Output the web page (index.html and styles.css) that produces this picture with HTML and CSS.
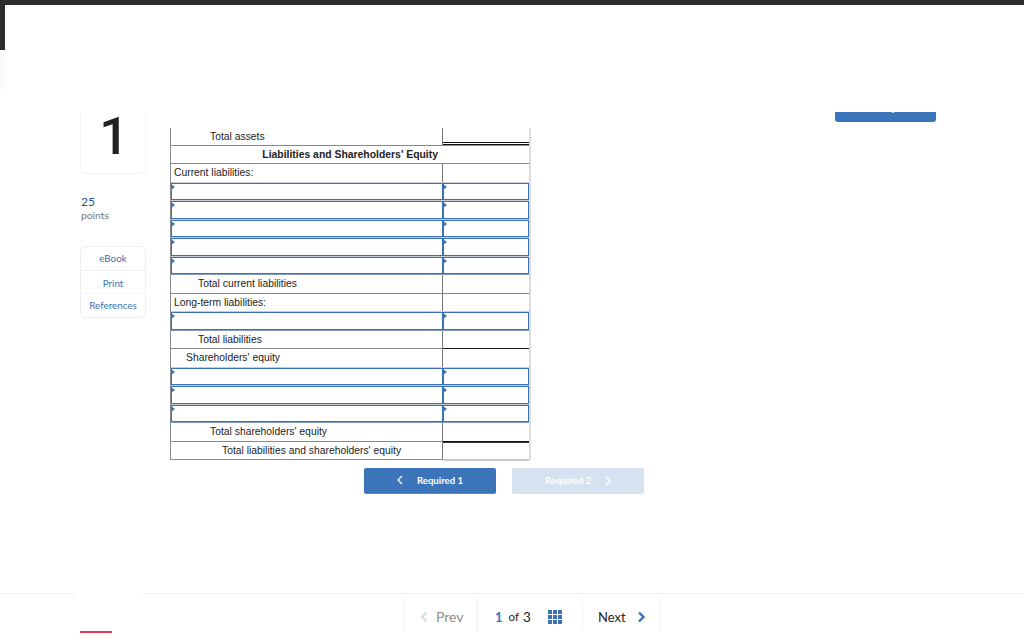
FILE: index.html
```html
<!DOCTYPE html>
<html lang="en">
<head>
<meta charset="utf-8">
<title>Balance sheet</title>
<link rel="stylesheet" href="styles.css">
</head>
<body>
<div class="page">
  <header class="top">
    <div class="top-bar"></div>
    <div class="top-side"><div class="side-dark"></div><div class="side-pale"></div></div>
  </header>
  <main class="main">
    <aside class="side">
      <div class="qnum">1</div>
      <div class="pts"><div class="pts-n">25</div><div class="pts-l">points</div></div>
      <nav class="links">
        <a class="link link-a">eBook</a>
        <a class="link link-b">Print</a>
        <a class="link link-c">References</a>
      </nav>
    </aside>
    <section class="work">
      <div class="sheet">
        <div class="row first"><div class="lab in2">Total assets</div><div class="val dbl"></div></div>
        <div class="row"><div class="head">Liabilities and Shareholders' Equity</div></div>
        <div class="row"><div class="lab">Current liabilities:</div><div class="val"></div></div>
        <div class="row inp"><div class="fld"></div><div class="fld"></div></div>
        <div class="row inp"><div class="fld"></div><div class="fld"></div></div>
        <div class="row inp"><div class="fld"></div><div class="fld"></div></div>
        <div class="row inp"><div class="fld"></div><div class="fld"></div></div>
        <div class="row inp"><div class="fld"></div><div class="fld"></div></div>
        <div class="row"><div class="lab in1">Total current liabilities</div><div class="val"></div></div>
        <div class="row"><div class="lab">Long-term liabilities:</div><div class="val"></div></div>
        <div class="row inp"><div class="fld"></div><div class="fld"></div></div>
        <div class="row"><div class="lab in1">Total liabilities</div><div class="val sum"></div></div>
        <div class="row"><div class="lab in0">Shareholders' equity</div><div class="val"></div></div>
        <div class="row inp"><div class="fld"></div><div class="fld"></div></div>
        <div class="row inp"><div class="fld"></div><div class="fld"></div></div>
        <div class="row inp"><div class="fld"></div><div class="fld"></div></div>
        <div class="row"><div class="lab in2">Total shareholders' equity</div><div class="val sum"></div></div>
        <div class="row"><div class="lab in3">Total liabilities and shareholders' equity</div><div class="val dbl-b"></div></div>
      </div>
      <div class="steps">
        <button class="step on"><svg class="chev" viewBox="0 0 6 10"><path d="M5 1 1 5l4 4"/></svg><span>Required 1</span></button>
        <button class="step off"><span>Required 2</span><svg class="chev" viewBox="0 0 6 10"><path d="M1 1l4 4-4 4"/></svg></button>
      </div>
    </section>
    <div class="tools"><button class="check">Check my work</button></div>
  </main>
  <footer class="foot">
    <div class="foot-marker"></div>
    <div class="pager">
      <div class="pg prev"><svg class="pg-chev" viewBox="0 0 8 12"><path d="M6.500 1.500 2 6l4.500 4.500"/></svg><span>Prev</span></div>
      <div class="pg mid">
        <span class="cur">1</span><span class="of">of</span><span class="tot">3</span>
        <svg class="gridi" viewBox="0 0 14 14"><path d="M0 0h4v4H0zM5 0h4v4H5zM10 0h4v4h-4zM0 5h4v4H0zM5 5h4v4H5zM10 5h4v4h-4zM0 10h4v4H0zM5 10h4v4H5zM10 10h4v4h-4z"/></svg>
      </div>
      <div class="pg next"><span>Next</span><svg class="pg-chev" viewBox="0 0 8 12"><path d="M2 1.500 6.500 6 2 10.500"/></svg></div>
    </div>
  </footer>
</div>
</body>
</html>
```
FILE: styles.css
```css
* { box-sizing: border-box; }
html, body { margin: 0; padding: 0; background: #fff; }
.page { width: 1024px; height: 640px; display: flex; flex-direction: column; overflow: hidden; font-family: Lato, "Liberation Sans", sans-serif; }

.top { height: 112px; flex: none; }
.top-bar { height: 5px; background: #2d2d2d; }
.top-side { width: 5px; }
.side-dark { height: 45px; background: #2d2d2d; }
.side-pale { height: 40px; background: #fbfbfb; }

.main { height: 481px; flex: none; display: flex; padding-left: 80px; }
.side { width: 66px; flex: none; }
.qnum { height: 62px; border: 1px solid #f2f2f2; border-top: 0; border-radius: 0 0 6px 6px; padding-left: 2px; font-family: Roboto, sans-serif; font-weight: 500; font-size: 52px; line-height: 50px; text-align: center; color: #222; }
.pts { margin-top: 21px; padding-left: 1px; }
.pts-n { font-size: 12px; line-height: 14px; color: #23568f; }
.pts-l { font-size: 10.3px; line-height: 13px; color: #777; }
.links { margin-top: 24px; height: 72px; border: 1px solid #eeeeee; border-radius: 5px; display: flex; flex-direction: column; }
.link { display: block; text-align: center; color: #3b72b5; font-size: 9.8px; }
.link-a { height: 24px; line-height: 23px; border-bottom: 1px solid #f0f0f0; }
.link-b { height: 23px; line-height: 25px; border-bottom: 1px solid #f6f6f6; }
.link-c { height: 23px; line-height: 22px; }

.work { width: 360px; flex: none; margin-left: 24px; padding-top: 16px; font-family: "Liberation Sans", Arial, sans-serif; }
.sheet { border-left: 1px solid #8a8a8a; border-right: 2px solid #dcdcdc; width: 361px; }
.row { height: 18.47px; display: flex; font-size: 10.35px; color: #222; border-bottom: 1px solid #8a8a8a; }
.row:has(+ .inp) { border-bottom-color: #c5ccd6; }
.first { height: 18px; }
.lab { width: 272px; line-height: 18.500px; padding-left: 3px; border-right: 1px solid #777; white-space: nowrap; }
.in0 { padding-left: 15px; }
.in1 { padding-left: 27px; }
.in2 { padding-left: 39px; }
.in3 { padding-left: 51px; }
.val { width: 86px; }
.head { width: 267px; font-weight: 700; font-size: 10.400px; line-height: 18.500px; text-align: right; white-space: nowrap; }
.dbl { border-bottom: 3px double #111; }
.sum { border-bottom: 1px solid #111; margin-bottom: -1px; }
.dbl-b { border-bottom: 2px solid #c8c8c8; margin-bottom: -2px; border-top: 1px solid #333; }
.inp { border-bottom: 1px solid #7f9cc2; }
.fld { position: relative; width: 272px; border: 1px solid #3b72b5; }
.fld + .fld { width: 86px; }
.fld::before { content: ""; position: absolute; left: -1px; top: 0; border-left: 4px solid #3b72b5; border-top: 3px solid transparent; border-bottom: 3px solid transparent; }

.steps { display: flex; gap: 16px; margin: 8px 0 0 194px; width: 280px; }
.step { width: 132px; height: 26px; flex: none; border: 0; border-radius: 2px; color: #fff; font: 700 9.600px Lato, "Liberation Sans", sans-serif; display: flex; align-items: center; justify-content: center; gap: 14px; padding: 0; }
.on { background: #3b74b8; border-bottom: 1px solid #5a8ac4; }
.off { background: #d7e2f0; }
.chev { width: 6px; height: 10px; fill: none; stroke: #fff; stroke-width: 1.3; }

.tools { margin-left: 305px; width: 101px; height: 10px; overflow: hidden; }
.check { display: block; width: 101px; height: 30px; margin-top: -20px; border: 0; border-radius: 3px; background: #3b74b8; color: #fff; font: 700 12px/20px Lato, "Liberation Sans", sans-serif; padding: 5px 0 5px; }

.foot { position: relative; flex: 1; border-top: 1px solid #f1f1f1; }
.foot-marker { position: absolute; left: 75px; top: -1px; width: 68px; height: 41px; background: #fff; }
.foot-marker::after { content: ""; position: absolute; left: 5px; top: 38px; width: 32px; height: 2px; background: #e8384f; }
.pager { display: flex; margin: 4px 0 0 404px; height: 34px; width: 257px; border-left: 1px solid #f3f3f3; border-right: 1px solid #f3f3f3; }
.pg { display: flex; align-items: center; font-size: 14px; padding-top: 3px; }
.prev { width: 73px; padding-left: 15px; gap: 8px; color: #8e8e8e; border-right: 1px solid #f3f3f3; }
.mid { width: 105px; padding-left: 17px; color: #222; border-right: 1px solid #f3f3f3; }
.next { flex: 1; padding-left: 15px; gap: 11px; color: #222; font-size: 13px; }
.cur { color: #3b72b5; font-weight: 700; font-size: 13px; }
.of { font-size: 11.500px; margin-left: 6px; }
.tot { margin-left: 4px; font-size: 13.500px; }
.gridi { width: 14px; height: 14px; margin-left: 17px; fill: #3b72b5; }
.pg-chev { width: 8px; height: 12px; fill: none; stroke-width: 2.400; stroke: #3b72b5; }
.prev .pg-chev { stroke: #d3e0ef; }
```
